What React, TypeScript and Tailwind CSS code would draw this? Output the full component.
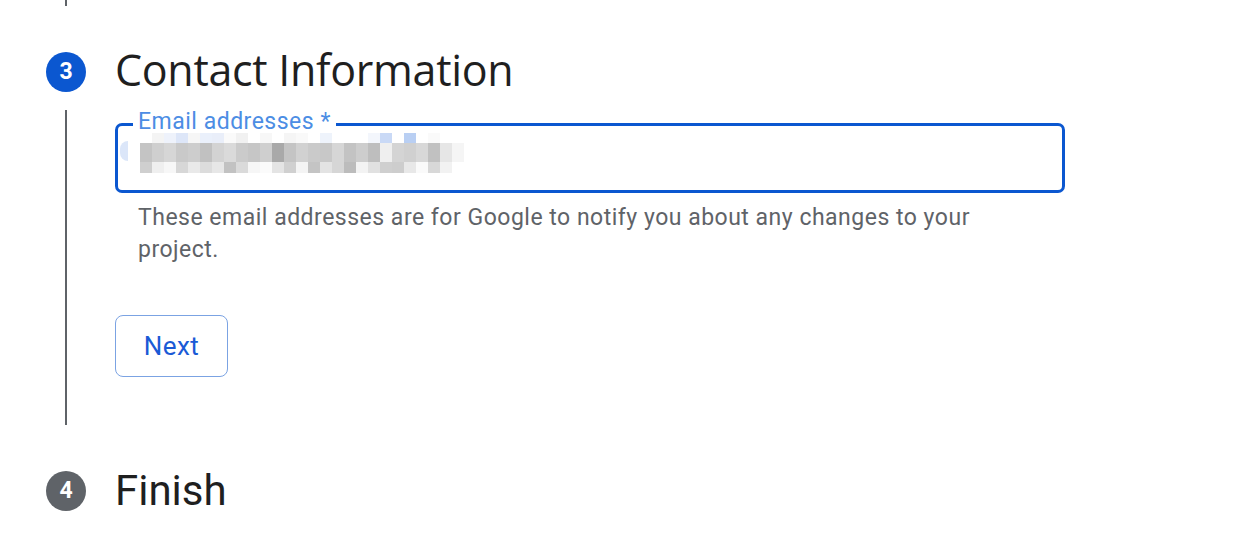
import React from "react";

const rowA = [
  "#ffffff", "#f4f4f4", "#eef2fb", "#dde6f8", "#f6f6f6", "#eaf0fb", "#e9eef9", "#fafafa",
  "#f1f1f1", "#ffffff", "#f7f7f7", "#ffffff", "#f5f5f5", "#f9f9f9", "#ffffff", "#eef3fb",
  "#ffffff", "#ffffff", "#ffffff", "#f3f6fc", "#c9d9f6", "#ffffff", "#b9cff3", "#ffffff",
  "#fafafa", "#ffffff", "#ffffff", "#ffffff",
];
const rowB = [
  "#c4c4c4", "#cfcfcf", "#d6d6d6", "#c9c9c9", "#cdcdcd", "#c1c1c1", "#d3d3d3", "#dadada",
  "#cbcbcb", "#c6c6c6", "#cfcfcf", "#a9a9a9", "#c4c4c4", "#d1d1d1", "#cacaca", "#c8c8c8",
  "#d6d6d6", "#c3c3c3", "#cdcdcd", "#bebebe", "#efefef", "#d4d4d4", "#d0d0d0", "#d8d8d8",
  "#c1c1c1", "#e6e6e6", "#f5f5f5", "#ffffff",
];
const rowC = [
  "#cfcfcf", "#efefef", "#f7f7f7", "#d7d7d7", "#e9e9e9", "#dcdcdc", "#e7e7e7", "#c2c2c2",
  "#dadada", "#f6f6f6", "#fbfbfb", "#e4e4e4", "#d0d0d0", "#f4f4f4", "#c4c4c4", "#e3e3e3",
  "#d6d6d6", "#bcbcbc", "#f3f3f3", "#e1e1e1", "#cfcfcf", "#cdcdcd", "#e8e8e8", "#fafafa",
  "#d8d8d8", "#f2f2f2", "#ffffff", "#ffffff",
];

function Blur() {
  // pixelated (redacted) email value
  return (
    <div className="flex flex-col">
      {[
        { cells: rowA, h: "h-[10px]" },
        { cells: rowB, h: "h-[19px]" },
        { cells: rowC, h: "h-[11px]" },
      ].map((row, i) => (
        <div key={i} className={`flex ${row.h}`}>
          {row.cells.map((c, j) => (
            <div key={j} className="w-[12px] h-full" style={{ backgroundColor: c }} />
          ))}
        </div>
      ))}
    </div>
  );
}

export default function App() {
  return (
    <div className="relative w-[1234px] h-[544px] bg-white overflow-hidden font-['Roboto',sans-serif]">
      <div className="pl-[46px]">
        {/* line from previous step */}
        <div className="w-10 flex justify-center">
          <div className="w-[2px] h-[6px] bg-[#5f6368]" />
        </div>

        {/* Step 3 */}
        <div className="flex gap-[29px] mt-[46px]">
          <div className="w-10 flex flex-col items-center">
            <div className="w-10 h-10 rounded-full bg-[#0b57d0] flex items-center justify-center text-white text-[23px] font-bold">
              3
            </div>
            <div className="mt-[18px] w-[2px] h-[315px] bg-[#5f6368]" />
          </div>

          <div className="flex flex-col">
            <div className="h-10 flex items-center -mt-[3px]">
              <h2 className="text-[43px] leading-none text-[#1f1f1f] font-['Open_Sans',sans-serif] tracking-[-0.3px]">
                Contact Information
              </h2>
            </div>

            <div className="relative mt-[34px] w-[950px] h-[70px] border-[3px] border-[#0b57d0] rounded-[7px]">
              <span className="absolute -top-[17px] left-[15px] px-[5px] bg-white text-[23px] leading-[26px] tracking-[0.5px] text-[#4c8de4]">
                Email addresses *
              </span>
              <div className="absolute left-[2px] top-[15px] w-[8px] h-[20px] rounded-l-full bg-[#dbe6f9]" />
              <div className="absolute left-[22px] top-[7px]">
                <Blur />
              </div>
            </div>

            <p className="mt-[9px] pl-[23px] w-[880px] text-[23px] leading-[32px] tracking-[0.5px] text-[#5f6368]">
              These email addresses are for Google to notify you about any changes to your project.
            </p>

            <button className="mt-[49px] w-[113px] h-[62px] border border-[#7ba3e3] rounded-[8px] text-[26px] font-normal tracking-[0.5px] text-[#1a5ad6]">
              Next
            </button>
          </div>
        </div>

        {/* Step 4 */}
        <div className="flex gap-[29px] mt-[45px] items-center">
          <div className="w-10 h-10 rounded-full bg-[#5f6368] flex items-center justify-center text-white text-[23px] font-bold">
            4
          </div>
          <h2 className="text-[42px] leading-none text-[#1f1f1f]">Finish</h2>
        </div>
      </div>
    </div>
  );
}
